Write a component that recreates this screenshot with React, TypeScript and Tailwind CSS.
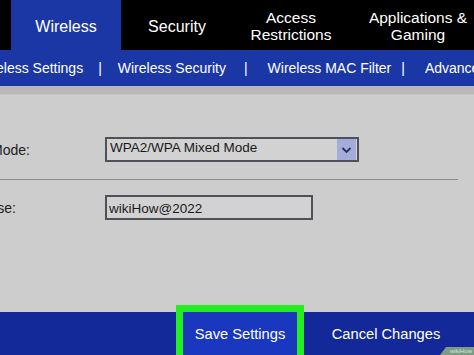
import React from "react";

export default function App() {
  const font = { fontFamily: '"Liberation Sans", Arial, sans-serif' };
  return (
    <div className="w-[474px] h-[355px] overflow-hidden bg-[#cdcdcd] flex flex-col relative" style={font}>
      {/* top tabs */}
      <div className="h-[50px] bg-black flex shrink-0 text-white">
        <div className="w-[11px] shrink-0" />
        <div className="w-[110px] shrink-0 bg-[#1b37a6] flex items-center justify-center text-[16px] pt-[3px]">Wireless</div>
        <div className="w-[112px] shrink-0 flex items-center justify-center text-[16px] pt-[3px]">Security</div>
        <div className="w-[116px] shrink-0 flex flex-col items-center justify-center text-[15.5px] leading-[17px] text-center pt-[2px]">
          <span>Access</span>
          <span>Restrictions</span>
        </div>
        <div className="w-[138px] shrink-0 flex flex-col items-center justify-center text-[15.5px] leading-[17px] text-center pt-[2px]">
          <span className="whitespace-nowrap">Applications &amp;</span>
          <span>Gaming</span>
        </div>
      </div>
      {/* subnav */}
      <div className="h-[36px] bg-[#1b37a6] flex items-center shrink-0 text-white text-[14px] whitespace-nowrap overflow-hidden">
        <div className="flex items-center ml-[-25px] pt-[1px] shrink-0">
          <span>Wireless Settings</span>
          <span className="ml-[15px]">|</span>
          <span className="ml-[16px]">Wireless Security</span>
          <span className="ml-[18px]">|</span>
          <span className="ml-[20px]">Wireless MAC Filter</span>
          <span className="ml-[10px]">|</span>
          <span className="ml-[20px]">Advanced Wireless Settings</span>
        </div>
      </div>
      {/* gray strip */}
      <div className="h-[8px] bg-[#b8b8b8] shrink-0" />
      <div className="h-[1px] bg-[#c4c4c4] shrink-0" />
      {/* content */}
      <div className="flex-1 flex flex-col text-[#222] text-[14px]">
        <div className="flex items-center mt-[42px]">
          <div className="w-[30px] shrink-0 flex justify-end whitespace-nowrap pt-[2px]">
            <span>Security Mode:</span>
          </div>
          <div className="ml-[75px] w-[254px] h-[25px] border-2 border-[#505058] bg-[#d2d2d2] flex items-center justify-between">
            <span className="pl-[3px] pb-[2px] text-[13.5px] text-[#1a1a1a]">WPA2/WPA Mixed Mode</span>
            <div className="w-[19px] h-[21px] mr-[1px] bg-[#a5acd9] flex items-center justify-center">
              <svg width="11" height="8" viewBox="0 0 11 8">
                <path d="M1.5 2 L5.5 6 L9.5 2" fill="none" stroke="#253066" strokeWidth="1.8" />
              </svg>
            </div>
          </div>
        </div>
        <div className="h-[1px] w-[458px] bg-[#8e8e8e] mt-[17px]" />
        <div className="flex items-center mt-[15px]">
          <div className="w-[16px] shrink-0 flex justify-end whitespace-nowrap pt-[2px]">
            <span>Passphrase:</span>
          </div>
          <div className="ml-[89px] w-[208px] h-[25px] border-2 border-[#505058] bg-[#d2d2d2] flex items-center">
            <span className="pl-[2px] pt-[3px] text-[13.5px] text-[#1a1a1a]">wikiHow@2022</span>
          </div>
        </div>
      </div>
      {/* bottom bar */}
      <div className="h-[43px] bg-[#13299a] shrink-0 flex text-white text-[14.7px]">
        <div className="w-[176px] shrink-0" />
        <div className="w-[128px] shrink-0 h-[50px] mt-[-7px] bg-[#22ee22] p-[7px] pb-0">
          <div className="w-full h-full bg-[#1a37c0] flex items-center justify-center pt-[1px]">Save Settings</div>
        </div>
        <div className="flex-1 flex items-center justify-center pt-[1px] pr-[6px]">Cancel Changes</div>
      </div>
      <div className="absolute right-0 bottom-0 h-[8px] w-[34px] bg-[#7d9a85] text-[6px] leading-[8px] text-[#d8e4da] text-right pr-[2px] [clip-path:polygon(6px_0,100%_0,100%_100%,0_100%)]">
        wikiHow
      </div>
    </div>
  );
}
